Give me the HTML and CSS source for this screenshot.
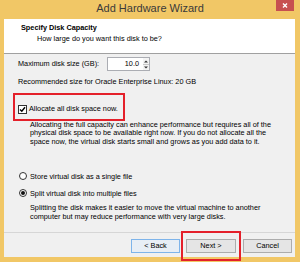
FILE: index.html
```html
<!DOCTYPE html>
<html>
<head>
<meta charset="utf-8">
<title>Add Hardware Wizard</title>
<link rel="stylesheet" href="styles.css">
</head>
<body>
<div class="window">
  <div class="titlebar">
    <span></span>
    <div class="title">Add Hardware Wizard</div>
    <div class="close">
      <svg width="18" height="11" viewBox="0 0 18 11"><path d="M7 3.5 L11 7.5 M11 3.5 L7 7.5" stroke="#fff" stroke-width="1.4" fill="none"/></svg>
    </div>
  </div>
  <div class="client">
    <div class="header">
      <div class="h-title">Specify Disk Capacity</div>
      <div class="h-sub">How large do you want this disk to be?</div>
    </div>
    <div class="content">
      <div class="size-row">
        <span class="size-label">Maximum disk size (GB):</span>
        <div class="spin">
          <span class="spin-val">10.0</span>
          <div class="spin-btns">
            <svg width="6" height="13" viewBox="0 0 6 13"><path d="M1 4.5 L3 2.5 L5 4.5 Z M1 8.5 L3 10.5 L5 8.5 Z" fill="#333"/><path d="M0 6.5 H6" stroke="#c8c8c8" stroke-width="1"/></svg>
          </div>
        </div>
      </div>
      <div class="rec">Recommended size for Oracle Enterprise Linux: 20 GB</div>
      <div class="alloc">
        <div class="check-row">
          <span class="checkbox">
            <svg width="7" height="7" viewBox="0 0 7 7"><path d="M1 3.5 L2.8 5.3 L6 1.2" stroke="#000" stroke-width="1.4" fill="none"/></svg>
          </span>
          <span>Allocate all disk space now.</span>
        </div>
      </div>
      <p class="desc desc1">Allocating the full capacity can enhance performance but requires all of the<br>physical disk space to be available right now. If you do not allocate all the<br>space now, the virtual disk starts small and grows as you add data to it.</p>
      <div class="radio-row first"><span class="radio"></span><span>Store virtual disk as a single file</span></div>
      <div class="radio-row second"><span class="radio checked"></span><span>Split virtual disk into multiple files</span></div>
      <p class="desc desc2">Splitting the disk makes it easier to move the virtual machine to another<br>computer but may reduce performance with very large disks.</p>
    </div>
    <div class="footer">
      <button class="btn btn-back">&lt; Back</button>
      <span class="next-wrap"><button class="btn btn-next">Next &gt;</button></span>
      <button class="btn btn-cancel">Cancel</button>
    </div>
  </div>
</div>
</body>
</html>
```

FILE: styles.css
```css
* { box-sizing: border-box; }
html, body { margin: 0; padding: 0; }
body {
  background: #f1c766;
  font-family: "Liberation Sans", Arial, sans-serif;
  font-size: 7.3px;
  color: #000;
  width: 300px;
  height: 262px;
  overflow: hidden;
}
.window {
  width: 300px;
  height: 262px;
  display: flex;
  flex-direction: column;
}
.titlebar {
  height: 19px;
  display: grid;
  grid-template-columns: 1fr auto 1fr;
  align-items: start;
}
.title {
  font-size: 11px;
  line-height: 17px;
  color: #3a3a3a;
  white-space: nowrap;
}
.close {
  justify-self: end;
  width: 18px;
  height: 11px;
  margin-right: 6px;
  background: #c75050;
  display: flex;
}
.client {
  flex: 1;
  margin: 0 5px 5px 4px;
  display: flex;
  flex-direction: column;
  background: #f0f0f0;
}
.header {
  height: 35px;
  background: #fff;
  border-bottom: 1px solid #a0a0a0;
  padding-top: 4px;
}
.h-title {
  font-weight: bold;
  line-height: 10px;
  padding-left: 17px;
  margin-bottom: 1px;
}
.h-sub {
  line-height: 10px;
  padding-left: 33px;
}
.content {
  flex: 1;
  padding-left: 14px;
}
.size-row {
  margin-top: 3px;
  height: 14px;
  display: flex;
  align-items: center;
}
.size-label {
  line-height: 10px;
  width: 89px;
}
.spin {
  width: 43px;
  height: 14px;
  background: #fff;
  border: 1px solid #abadb3;
  display: flex;
  align-items: center;
}
.spin-val {
  flex: 1;
  text-align: right;
  padding-right: 4px;
  line-height: 10px;
}
.spin-btns {
  width: 6px;
  height: 12px;
  background: #f4f4f4;
  display: flex;
  align-items: center;
}
.rec {
  margin-top: 6px;
  line-height: 10px;
}
.alloc {
  margin-top: 6px;
  margin-left: -5px;
  width: 112px;
  height: 28px;
  border: 2px solid #e4202a;
  padding: 10px 0 0 3px;
}
.check-row {
  display: flex;
  align-items: center;
  height: 8px;
  line-height: 8px;
  gap: 2px;
}
.checkbox {
  width: 9px;
  height: 9px;
  border: 1px solid #333;
  background: #fff;
  display: flex;
  align-items: center;
  justify-content: center;
}
.desc {
  margin: 0 0 0 12px;
  white-space: nowrap;
}
.desc1 { line-height: 8.3px; }
.desc2 { line-height: 9px; margin-top: 5.5px; }
.radio-row {
  display: flex;
  align-items: center;
  height: 9px;
  line-height: 9px;
  gap: 3px;
  margin-left: 1px;
}
.radio-row.first { margin-top: 26px; }
.radio-row.second { margin-top: 8px; }
.radio {
  width: 8px;
  height: 8px;
  border-radius: 50%;
  border: 1px solid #333;
  background: #fff;
  display: flex;
  align-items: center;
  justify-content: center;
}
.radio.checked::before {
  content: "";
  width: 4px;
  height: 4px;
  border-radius: 50%;
  background: #111;
}
.footer {
  height: 25px;
  border-top: 1px solid #d6d6d6;
  padding: 6px 3px 4px 0;
  display: flex;
  justify-content: flex-end;
  align-items: flex-start;
}
.btn {
  height: 14px;
  padding: 0;
  font-family: "Liberation Sans", Arial, sans-serif;
  font-size: 7.3px;
  line-height: 12px;
  color: #000;
  background: #e5e5e5;
  border: 1px solid #acacac;
  display: block;
}
.btn-back { width: 49px; margin-right: 6px; border-color: #7eb4ea; background: #e8eef5; }
.next-wrap { position: relative; display: block; margin-right: 7px; }
.btn-next { width: 50px; }
.next-wrap::after {
  content: "";
  position: absolute;
  top: -8px;
  bottom: -8px;
  left: -5px;
  right: -5px;
  border: 2px solid #e4202a;
}
.btn-cancel { width: 49px; }
```
